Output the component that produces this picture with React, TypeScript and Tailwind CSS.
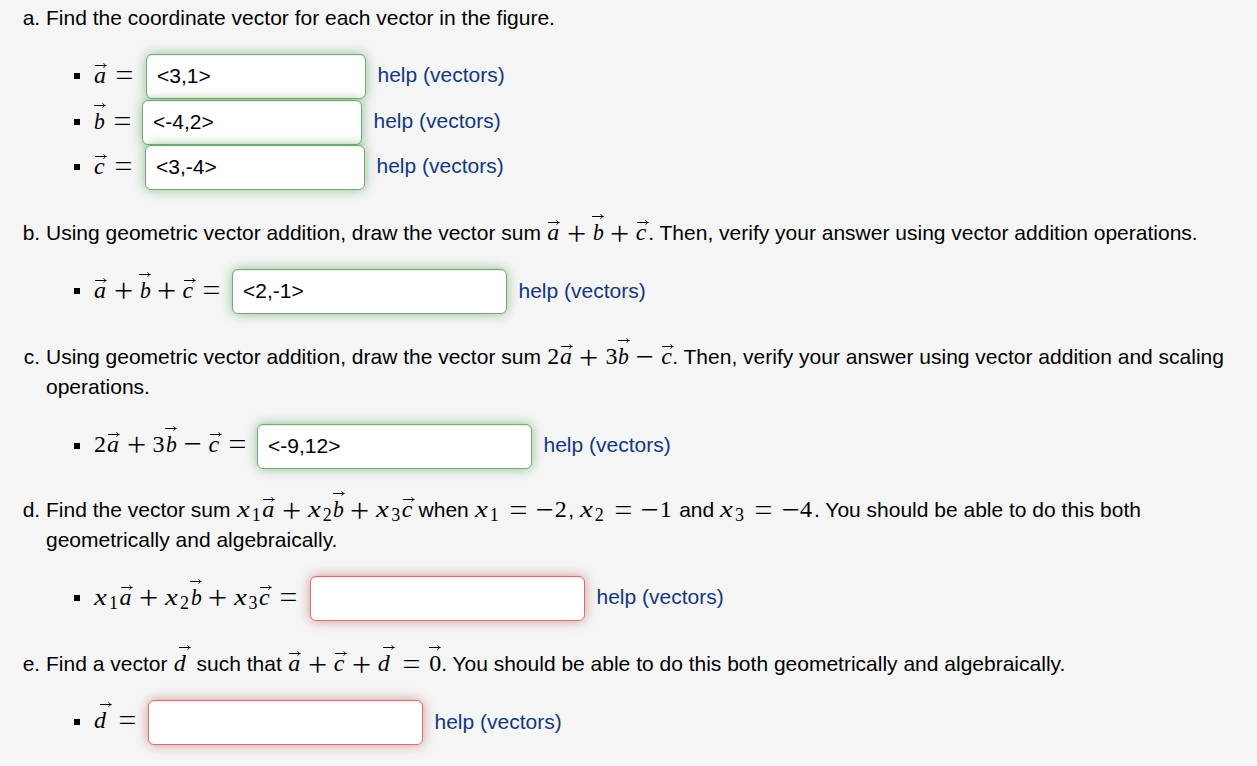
import type { ReactNode } from "react";
import clsx from "clsx";

type Letter = "a" | "b" | "c" | "d" | "0";

// advance width of each letter, and where its arrow sits above it
const letters: Record<Letter, { box: string; arrow: string; glyph: string }> = {
  a: { box: "w-[12.5px]", arrow: "left-[1px] top-[-1px]", glyph: "italic" },
  b: { box: "w-[10px]", arrow: "left-[-0.5px] top-[-7px]", glyph: "italic scale-x-90" },
  c: { box: "w-[11px]", arrow: "left-[1px] top-[-1px]", glyph: "italic" },
  d: { box: "w-[15.5px]", arrow: "left-[5.5px] top-[-7px]", glyph: "italic" },
  "0": { box: "w-[12px]", arrow: "left-0 top-[-7px]", glyph: "" },
};

function Vec({ of }: { of: Letter }) {
  const { box, arrow, glyph } = letters[of];
  return (
    <span className={clsx("relative inline-block", box)}>
      <span className={clsx("inline-block origin-left", glyph)}>{of}</span>
      <svg
        className={clsx("absolute h-[7px] w-[12px]", arrow)}
        viewBox="0 0 12 7"
        fill="none"
        stroke="black"
        strokeLinecap="round"
      >
        <path d="M0.5 3.5H11" strokeWidth="1.1" />
        <path d="M8.8 1.6C9.3 2.6 10 3.2 11.2 3.5C10 3.8 9.3 4.4 8.8 5.4" strokeWidth="0.9" />
      </svg>
    </span>
  );
}

function Op({ look, children }: { look: string; children: string }) {
  return (
    <span
      className={clsx(
        "relative top-[1.5px] inline-flex w-[17px] shrink-0 justify-center font-[family-name:Inter] text-[32px] leading-[0] font-extralight",
        look,
      )}
    >
      {children}
    </span>
  );
}

const Plus = () => <Op look="mx-2 scale-x-115 scale-y-115">+</Op>;
const Minus = () => <Op look="mx-2 scale-x-110">−</Op>;
const Equals = () => <Op look="mx-[9.5px] scale-x-125">=</Op>;

function Num({ children }: { children: string }) {
  return <span className="inline-block w-[13px]">{children}</span>;
}

function Neg({ children }: { children: string }) {
  return (
    <>
      <Op look="mr-[1.5px] scale-x-110">−</Op>
      <Num>{children}</Num>
    </>
  );
}

function X({ sub }: { sub: string }) {
  return (
    <span className="inline-flex w-[25.5px] items-baseline">
      <span className="w-[15px] origin-left scale-x-120 italic">x</span>
      <span className="relative top-1 text-[18px] leading-[0]">{sub}</span>
    </span>
  );
}

function Tex({ width, children }: { width: string; children: ReactNode }) {
  return (
    <span
      className={clsx(
        "inline-flex items-baseline font-['Liberation_Serif',serif] text-2xl leading-none",
        width,
      )}
    >
      {children}
    </span>
  );
}

function Line({ label, children }: { label?: string; children: ReactNode }) {
  return (
    <div className="flex h-[30px] whitespace-pre">
      <span className="w-[46px] shrink-0 text-right">{label && `${label}. `}</span>
      <p>{children}</p>
    </div>
  );
}

interface AnswerProps {
  value?: string;
  wide?: boolean;
  helpClass?: string;
  children: ReactNode;
}

function Answer({ value = "", wide, helpClass = "-translate-y-px", children }: AnswerProps) {
  return (
    <div className="flex h-[45px] items-baseline pl-[74px]">
      <span className="mr-3.5 mb-px size-1.5 shrink-0 self-center bg-black" />
      {children}
      <input
        type="text"
        defaultValue={value}
        className={clsx(
          "h-[45px] rounded-md border bg-white px-2.5 pb-0.5 outline-none",
          wide ? "w-[275px]" : "w-[220px]",
          value
            ? "border-[#74ab76] shadow-[inset_0_1px_1px_rgba(0,0,0,0.075),0_0_12px_rgba(81,153,81,0.6)]"
            : "border-[#cf7272] shadow-[inset_0_1px_1px_rgba(0,0,0,0.075),0_0_12px_rgba(191,84,84,0.6)]",
        )}
      />
      <a className={clsx("ml-[11.5px] text-[#11387f]", helpClass)} href="#help">
        help (vectors)
      </a>
    </div>
  );
}

export default function App() {
  return (
    <main className="h-[766px] overflow-hidden bg-[#f5f5f5] pt-[3px] font-['Liberation_Sans',sans-serif] text-[21px] leading-[30px] text-black">
      <Line label="a">Find the coordinate vector for each vector in the figure.</Line>
      <div className="mt-[21px]">
        <Answer value="<3,1>">
          <Tex width="w-[52px]">
            <Vec of="a" />
            <Equals />
          </Tex>
        </Answer>
        <div className="mt-px">
          <Answer value="<-4,2>">
            <Tex width="w-[48px]">
              <Vec of="b" />
              <Equals />
            </Tex>
          </Answer>
        </div>
        <Answer value="<3,-4>">
          <Tex width="w-[51px]">
            <Vec of="c" />
            <Equals />
          </Tex>
        </Answer>
      </div>

      <div className="mt-7 mb-[21px]">
        <Line label="b">
          Using geometric vector addition, draw the vector sum{" "}
          <Tex width="w-[101.5px] pl-[0.5px]">
            <Vec of="a" />
            <Plus />
            <Vec of="b" />
            <Plus />
            <Vec of="c" />
          </Tex>
          . Then, verify your answer using vector addition operations.
        </Line>
      </div>
      <Answer value="<2,-1>" wide helpClass="translate-y-0">
        <Tex width="w-[138px]">
          <Vec of="a" />
          <Plus />
          <Vec of="b" />
          <Plus />
          <Vec of="c" />
          <Equals />
        </Tex>
      </Answer>

      <div className="mt-7 mb-[22px]">
        <Line label="c">
          Using geometric vector addition, draw the vector sum{" "}
          <Tex width="w-[125.5px] pl-[0.5px]">
            <Num>2</Num>
            <Vec of="a" />
            <Plus />
            <Num>3</Num>
            <Vec of="b" />
            <Minus />
            <Vec of="c" />
          </Tex>
          . Then, verify your answer using vector addition and scaling
        </Line>
        <Line>operations.</Line>
      </div>
      <Answer value="<-9,12>" wide>
        <Tex width="w-[163px] -translate-y-px">
          <Num>2</Num>
          <Vec of="a" />
          <Plus />
          <Num>3</Num>
          <Vec of="b" />
          <Minus />
          <Vec of="c" />
          <Equals />
        </Tex>
      </Answer>

      <div className="mt-[26px] mb-[21px]">
        <Line label="d">
          Find the vector sum{" "}
          <Tex width="w-[176.5px] pl-[0.5px]">
            <X sub="1" />
            <Vec of="a" />
            <Plus />
            <X sub="2" />
            <Vec of="b" />
            <Plus />
            <X sub="3" />
            <Vec of="c" />
          </Tex>
          {" when "}
          <Tex width="w-[93.5px]">
            <X sub="1" />
            <Equals />
            <Neg>2</Neg>
          </Tex>
          {", "}
          <Tex width="w-[93.5px]">
            <X sub="2" />
            <Equals />
            <Neg>1</Neg>
          </Tex>
          {" and "}
          <Tex width="w-[94px]">
            <X sub="3" />
            <Equals />
            <Neg>4</Neg>
          </Tex>
          . You should be able to do this both
        </Line>
        <Line>geometrically and algebraically.</Line>
      </div>
      <Answer wide>
        <Tex width="w-[216px]">
          <X sub="1" />
          <Vec of="a" />
          <Plus />
          <X sub="2" />
          <Vec of="b" />
          <Plus />
          <X sub="3" />
          <Vec of="c" />
          <Equals />
        </Tex>
      </Answer>

      <div className="mt-7 mb-[21px]">
        <Line label="e">
          Find a vector{" "}
          <Tex width="w-[17.5px] pl-[0.5px]">
            <Vec of="d" />
          </Tex>
          {" such that "}
          <Tex width="w-[153.5px] pl-[0.5px]">
            <Vec of="a" />
            <Plus />
            <Vec of="c" />
            <Plus />
            <Vec of="d" />
            <Equals />
            <Vec of="0" />
          </Tex>
          . You should be able to do this both geometrically and algebraically.
        </Line>
      </div>
      <Answer wide helpClass="translate-y-0">
        <Tex width="w-[54px] -translate-y-px">
          <Vec of="d" />
          <Equals />
        </Tex>
      </Answer>
    </main>
  );
}
